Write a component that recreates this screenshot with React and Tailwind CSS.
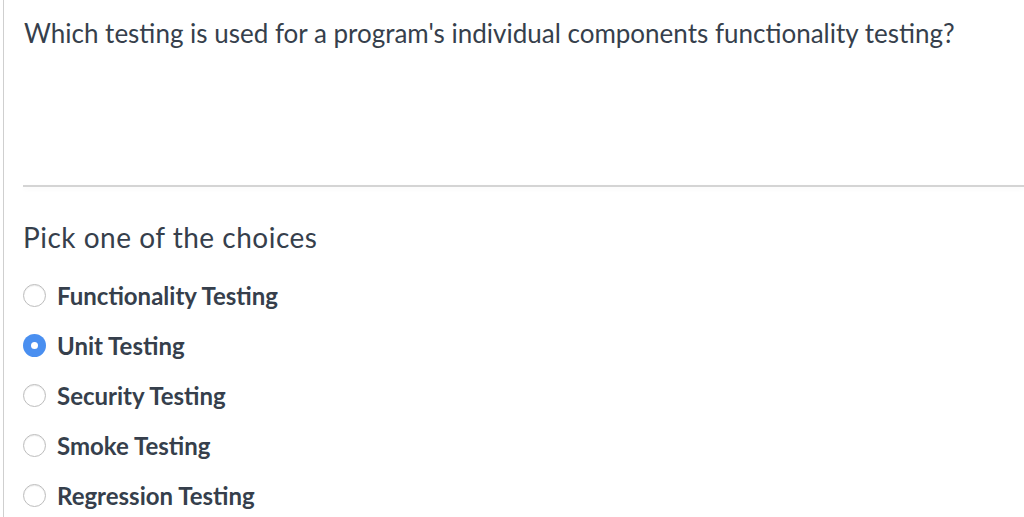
import React, { useState } from 'react'

const choices = [
    "Functionality Testing",
    "Unit Testing",
    "Security Testing",
    "Smoke Testing",
    "Regression Testing",
]

function App() {
    const [picked, setPicked] = useState(1);
    return (
        <div className='h-[517px] w-full bg-white overflow-hidden' style={{ fontFamily: 'Lato, "Noto Sans", sans-serif' }}>
            <div className='ml-[3px] h-full border-l border-[#cfcfcf]'>
                <div className='h-[185px] pl-[20px] pt-[17px]'>
                    <p className='text-[26px] leading-[32px] text-[#363f4c]'>
                        Which testing is used for a program's individual components functionality testing?
                    </p>
                </div>
                <div className='ml-[19px] h-[2px] bg-[#d4d4d4] shadow-[0_2px_4px_rgba(0,0,0,0.04)]'></div>
                <div className='pl-[19px] pt-[32px]'>
                    <h2 className='text-[28px] leading-[36px] tracking-[0.5px] text-[#363f4c]'>Pick one of the choices</h2>
                    <div className='mt-[15px] flex flex-col'>
                        {choices.map((c, i) => (
                            <label key={c} onClick={() => setPicked(i)} className='flex h-[50px] items-center gap-[11px] cursor-pointer'>
                                {picked === i ? (
                                    <span className='flex h-[23px] w-[23px] items-center justify-center rounded-full bg-[#4a8ff0]'>
                                        <span className='h-[7px] w-[7px] rounded-full bg-white'></span>
                                    </span>
                                ) : (
                                    <span className='h-[23px] w-[23px] rounded-full border border-[#bdbdbd] shadow-[inset_0_1px_1px_rgba(0,0,0,0.08)]'></span>
                                )}
                                <span className='pt-[2px] text-[24px] font-bold text-[#363f4c]'>{c}</span>
                            </label>
                        ))}
                    </div>
                </div>
            </div>
        </div>
    )
}

export default App
